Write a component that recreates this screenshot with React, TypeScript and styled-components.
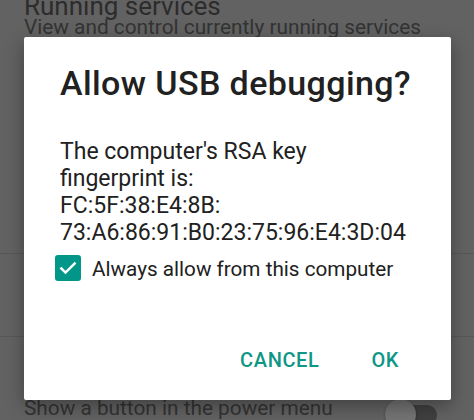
import React from 'react'
import styled, { createGlobalStyle } from 'styled-components'

const GlobalStyle = createGlobalStyle`
  html, body {
    margin: 0;
    padding: 0;
    background: #626262;
    font-family: Roboto, 'Noto Sans', sans-serif;
  }
  #root {
    position: relative;
    width: 474px;
    height: 420px;
    overflow: hidden;
  }
`

const SettingsList = styled.div`
  margin-top: -4px;
`

const SettingRow = styled.div<{ $height: number }>`
  display: flex;
  align-items: flex-start;
  height: ${p => p.$height}px;
  padding: 0 24px;
  box-sizing: border-box;
  border-bottom: 1px solid #575757;
`

const SettingText = styled.div`
  flex: 1;
  display: flex;
  flex-direction: column;
`

const SettingTitle = styled.div<{ $offset?: number }>`
  margin-top: ${p => p.$offset ?? 0}px;
  font-size: 26px;
  line-height: ${p => (p.$offset ? 28 : 20)}px;
  color: #2c2c2c;
`

const SettingSummary = styled.div`
  font-size: 20.8px;
  line-height: 22px;
  color: #333333;
`

const Switch = styled.div`
  position: relative;
  width: 52px;
  height: 31px;
  margin-top: 62px;
  margin-right: 13px;
`

const SwitchTrack = styled.div`
  position: absolute;
  left: 10px;
  right: 0;
  top: 6px;
  height: 20px;
  border-radius: 10px;
  background: #404040;
`

const SwitchThumb = styled.div`
  position: absolute;
  left: 0;
  top: 0;
  width: 31px;
  height: 31px;
  border-radius: 50%;
  background: #747474;
  box-shadow: 0 1px 3px rgba(0, 0, 0, 0.35);
`

const Dialog = styled.div`
  position: absolute;
  left: 24px;
  top: 37px;
  width: 427px;
  height: 363px;
  box-sizing: border-box;
  background: #ffffff;
  border-radius: 2px;
  box-shadow: 0 6px 18px rgba(0, 0, 0, 0.35);
  display: flex;
  flex-direction: column;
  padding: 28px 0 0;
`

const Title = styled.h2`
  margin: 0 36px;
  font-size: 34px;
  letter-spacing: 0.4px;
  line-height: 36px;
  font-weight: 500;
  color: #212121;
`

const Body = styled.div`
  margin: 37px 36px 0;
  font-size: 23px;
  line-height: 27px;
  color: #212121;
`

const CheckRow = styled.label`
  display: flex;
  align-items: flex-start;
  gap: 11px;
  margin: 9px 31px 0;
  font-size: 20.7px;
  line-height: 28px;
  color: #212121;
`

const CheckBox = styled.span`
  display: flex;
  align-items: center;
  justify-content: center;
  width: 26px;
  height: 26px;
  border-radius: 3px;
  background: #009688;
  flex-shrink: 0;
`

const Actions = styled.div`
  margin-top: auto;
  display: flex;
  justify-content: flex-end;
  padding: 0 26px 20px;
`

const ActionButton = styled.button`
  border: none;
  background: none;
  padding: 0 26px;
  font-family: Roboto, sans-serif;
  font-size: 20px;
  font-weight: 500;
  letter-spacing: 0.6px;
  line-height: 40px;
  color: #0e9686;
  text-transform: uppercase;
`

export default function App() {
  return (
    <>
      <GlobalStyle />
      <SettingsList>
        <SettingRow $height={258}>
          <SettingText>
            <SettingTitle>Running services</SettingTitle>
            <SettingSummary>View and control currently running services</SettingSummary>
          </SettingText>
        </SettingRow>
        <SettingRow $height={83} />
        <SettingRow $height={120}>
          <SettingText>
            <SettingTitle $offset={32}>Bug report shortcut</SettingTitle>
            <SettingSummary>Show a button in the power menu</SettingSummary>
          </SettingText>
          <Switch>
            <SwitchTrack />
            <SwitchThumb />
          </Switch>
        </SettingRow>
      </SettingsList>
      <Dialog>
        <Title>Allow USB debugging?</Title>
        <Body>
          The computer's RSA key
          <br />
          fingerprint is:
          <br />
          FC:5F:38:E4:8B:
          <br />
          73:A6:86:91:B0:23:75:96:E4:3D:04
        </Body>
        <CheckRow>
          <CheckBox>
            <svg width="20" height="20" viewBox="0 0 24 24">
              <path d="M4 12.5l5 5L20 6.5" fill="none" stroke="#fff" strokeWidth="3" strokeLinecap="square" />
            </svg>
          </CheckBox>
          Always allow from this computer
        </CheckRow>
        <Actions>
          <ActionButton>Cancel</ActionButton>
          <ActionButton>OK</ActionButton>
        </Actions>
      </Dialog>
    </>
  )
}
